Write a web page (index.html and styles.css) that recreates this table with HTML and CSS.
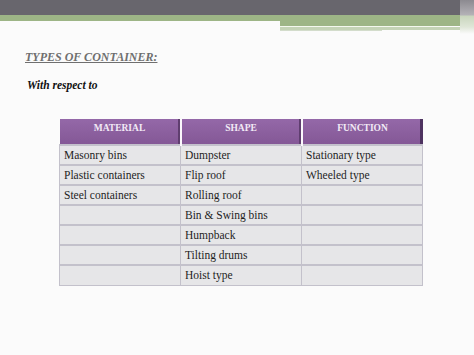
FILE: index.html
```html
<!DOCTYPE html>
<html lang="en">
<head>
  <meta charset="UTF-8">
  <title>Types of Container</title>
  <link rel="stylesheet" href="styles.css">
</head>
<body>
  <div class="top">
    <div class="bands">
      <div class="dark"></div>
      <div class="green-row">
        <div class="green-left"></div>
        <div class="green-right">
          <div class="g-main"></div>
          <div class="g-line"></div>
          <div class="g-light"></div>
          <div class="g-fade"></div>
        </div>
      </div>
    </div>
    <div class="edge"></div>
  </div>

  <div class="slide">
    <h1>TYPES OF CONTAINER:</h1>
    <p class="sub">With respect to</p>

    <table class="grid">
      <thead>
        <tr><th>MATERIAL</th><th>SHAPE</th><th>FUNCTION</th></tr>
      </thead>
      <tbody>
        <tr><td>Masonry bins</td><td>Dumpster</td><td>Stationary type</td></tr>
        <tr><td>Plastic containers</td><td>Flip roof</td><td>Wheeled type</td></tr>
        <tr><td>Steel containers</td><td>Rolling roof</td><td></td></tr>
        <tr><td></td><td>Bin &amp; Swing bins</td><td></td></tr>
        <tr><td></td><td>Humpback</td><td></td></tr>
        <tr><td></td><td>Tilting drums</td><td></td></tr>
        <tr><td></td><td>Hoist type</td><td></td></tr>
      </tbody>
    </table>
  </div>
</body>
</html>
```

FILE: styles.css
```css
body {
  margin: 0;
  background-color: #fbfbfb;
  font-family: 'Liberation Serif', 'Times New Roman', serif;
  color: #222;
  height: 355px;
  overflow: hidden;
}
.top {
  display: flex;
  height: 34px;
}
.bands {
  flex: 1;
}
.dark {
  height: 15px;
  background-color: #68666d;
}
.green-row {
  display: flex;
}
.green-left {
  width: 280px;
  height: 6px;
  background-color: #9db586;
}
.green-right {
  flex: 1;
}
.g-main {
  height: 11px;
  background-color: #9db586;
}
.g-line {
  height: 1px;
  margin-right: 20px;
  background-color: #f4f8ef;
}
.g-light {
  height: 3px;
  background-color: #c4d3b6;
}
.g-fade {
  height: 1px;
  width: 102px;
  background-color: #d3dccb;
}
.edge {
  width: 14px;
  background: linear-gradient(to bottom, #8c8a90 0, #b4b2b7 15px, #c9d6bd 16px, #dfe6d8 27px, #fbfbfb 34px);
}
.slide {
  padding: 16px 0 0 25px;
}
h1 {
  margin: 0;
  font-size: 12px;
  font-style: italic;
  font-weight: bold;
  color: #6f6f6f;
  text-decoration: underline;
  line-height: 15px;
}
.sub {
  margin: 13px 0 0 2px;
  font-size: 11.5px;
  font-style: italic;
  font-weight: bold;
  color: #111;
  line-height: 15px;
}
.grid {
  margin: 26px 0 0 34px;
  border-collapse: collapse;
  table-layout: fixed;
  width: 364px;
}
.grid th {
  height: 26px;
  padding: 0 0 7px;
  background: linear-gradient(to bottom, #9468a8, #845896);
  color: #f2eaf6;
  font-size: 9.5px;
  font-weight: bold;
  text-align: center;
  vertical-align: middle;
  border-right: 2px solid #fbf8fc;
  box-shadow: inset -2px 0 0 #5f3e6f;
  box-sizing: border-box;
}
.grid th:last-child {
  border-right: none;
  box-shadow: inset -3px 0 0 #4e3360;
}
.grid td {
  height: 20px;
  padding: 0 0 0 4px;
  border: 1px solid #c3c1cb;
  border-top: 2px solid #c3c1cb;
  background-color: #e6e6e8;
  font-size: 11.5px;
  line-height: 17px;
  color: #1e1e1e;
  box-sizing: border-box;
}
```
